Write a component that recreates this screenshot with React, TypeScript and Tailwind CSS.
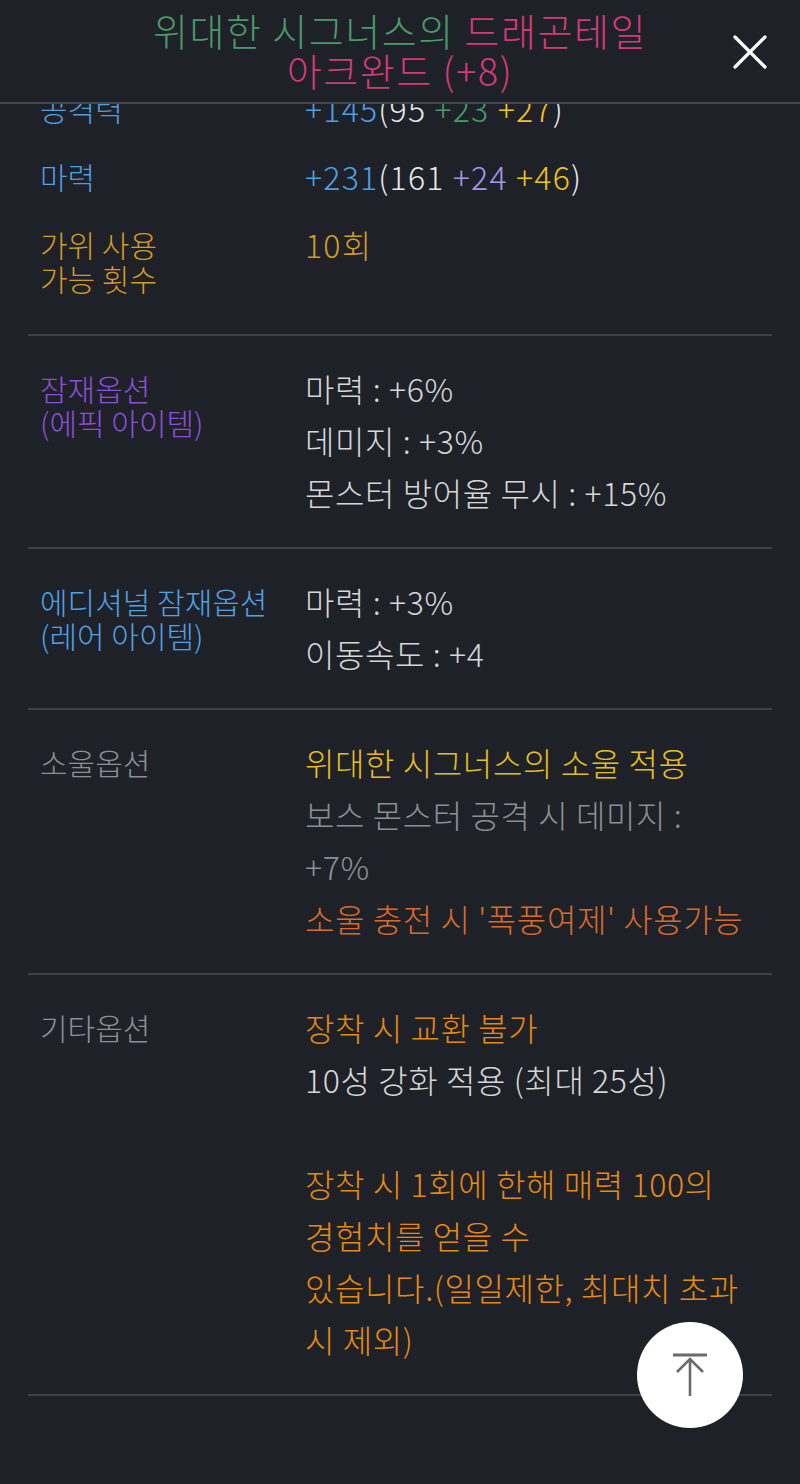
import React from "react";

const font = "font-['Noto_Sans_CJK_KR','Noto_Sans',sans-serif]";

const Divider = () => <div className="mx-[28px] border-t-2 border-[#3f4148]" />;

const OptionRow = ({
  label,
  labelColor,
  children,
}: {
  label: React.ReactNode;
  labelColor: string;
  children: React.ReactNode;
}) => (
  <div className="flex px-[40px] pt-[26px] pb-[29px]">
    <div className={`w-[265px] shrink-0 pt-[9px] text-[30px] leading-[34px] ${labelColor}`}>{label}</div>
    <div className="flex-1 whitespace-nowrap text-[32px] tracking-[0.6px] leading-[52px]">{children}</div>
  </div>
);

const App = () => {
  return (
    <div className={`w-[800px] h-[1484px] bg-[#1f2129] flex flex-col overflow-hidden relative font-light ${font}`}>
      {/* header */}
      <header className="h-[104px] shrink-0 border-b-2 border-[#45474e] flex items-start relative z-10 bg-[#1f2129]">
        <h1 className="flex-1 text-center text-[38px] tracking-[1.5px] leading-[40px] pt-[10px]">
          <span className="text-[#4a9a68]">위대한 시그너스의 </span>
          <span className="text-[#d33a78]">
            드래곤테일
            <br />
            아크완드 (+8)
          </span>
        </h1>
        <button className="absolute right-[30px] top-[32px] w-[40px] h-[40px] flex items-center justify-center">
          <svg width="36" height="36" viewBox="0 0 36 36">
            <path d="M3 3 L33 33 M33 3 L3 33" stroke="#ffffff" strokeWidth="3.2" strokeLinecap="round" />
          </svg>
        </button>
      </header>

      <main className="flex-1 overflow-hidden">
        <div className="-mt-[13px]">
          {/* stats */}
          <div className="flex flex-col gap-[34px] px-[40px] pb-[39px] text-[30px] leading-[34px]">
            <div className="flex">
              <div className="w-[265px] text-[#4f9fe0]">공격력</div>
              <div className="text-[#e8e8e8] text-[32px] tracking-[1.2px]">
                <span className="text-[#4f9fe0]">+145</span>(95 <span className="text-[#4a9a68]">+23</span>{" "}
                <span className="text-[#f0c419]">+27</span>)
              </div>
            </div>
            <div className="flex">
              <div className="w-[265px] text-[#4f9fe0]">마력</div>
              <div className="text-[#e8e8e8] text-[32px] tracking-[1.2px]">
                <span className="text-[#4f9fe0]">+231</span>(161 <span className="text-[#a597ec]">+24</span>{" "}
                <span className="text-[#f0c419]">+46</span>)
              </div>
            </div>
            <div className="flex">
              <div className="w-[265px] text-[#d39b22]">
                가위 사용
                <br />
                가능 횟수
              </div>
              <div className="text-[#d39b22] text-[32px] tracking-[1.2px]">10회</div>
            </div>
          </div>
          <Divider />

          <OptionRow
            labelColor="text-[#8b4fd9]"
            label={
              <>
                잠재옵션
                <br />
                (에픽 아이템)
              </>
            }
          >
            <div className="text-[#d6d6d6]">마력 : +6%</div>
            <div className="text-[#d6d6d6]">데미지 : +3%</div>
            <div className="text-[#d6d6d6]">몬스터 방어율 무시 : +15%</div>
          </OptionRow>
          <Divider />

          <OptionRow
            labelColor="text-[#4fa2e6]"
            label={
              <>
                에디셔널 잠재옵션
                <br />
                (레어 아이템)
              </>
            }
          >
            <div className="text-[#d6d6d6]">마력 : +3%</div>
            <div className="text-[#d6d6d6]">이동속도 : +4</div>
          </OptionRow>
          <Divider />

          <OptionRow labelColor="text-[#8d8f95]" label="소울옵션">
            <div className="text-[#e6be1e]">위대한 시그너스의 소울 적용</div>
            <div className="text-[#8d8f95]">
              보스 몬스터 공격 시 데미지 :
              <br />
              +7%
            </div>
            <div className="text-[#d96a2c]">소울 충전 시 '폭풍여제' 사용가능</div>
          </OptionRow>
          <Divider />

          <OptionRow labelColor="text-[#8d8f95]" label="기타옵션">
            <div className="text-[#e8890f]">장착 시 교환 불가</div>
            <div className="text-[#d6d6d6]">10성 강화 적용 (최대 25성)</div>
            <div className="h-[52px]" />
            <div className="text-[#e8890f]">
              장착 시 1회에 한해 매력 100의
              <br />
              경험치를 얻을 수
              <br />
              있습니다.(일일제한, 최대치 초과
              <br />
              시 제외)
            </div>
          </OptionRow>
          <Divider />
        </div>
      </main>

      {/* scroll to top */}
      <button className="absolute left-[637px] top-[1322px] w-[106px] h-[106px] rounded-full bg-white flex items-center justify-center">
        <svg width="40" height="46" viewBox="0 0 40 46">
          <path d="M3 3 H37" stroke="#6b6b6b" strokeWidth="3" />
          <path d="M20 7 V44 M7 20 L20 7 L33 20" stroke="#6b6b6b" strokeWidth="2.6" fill="none" />
        </svg>
      </button>
    </div>
  );
};

export default App;
